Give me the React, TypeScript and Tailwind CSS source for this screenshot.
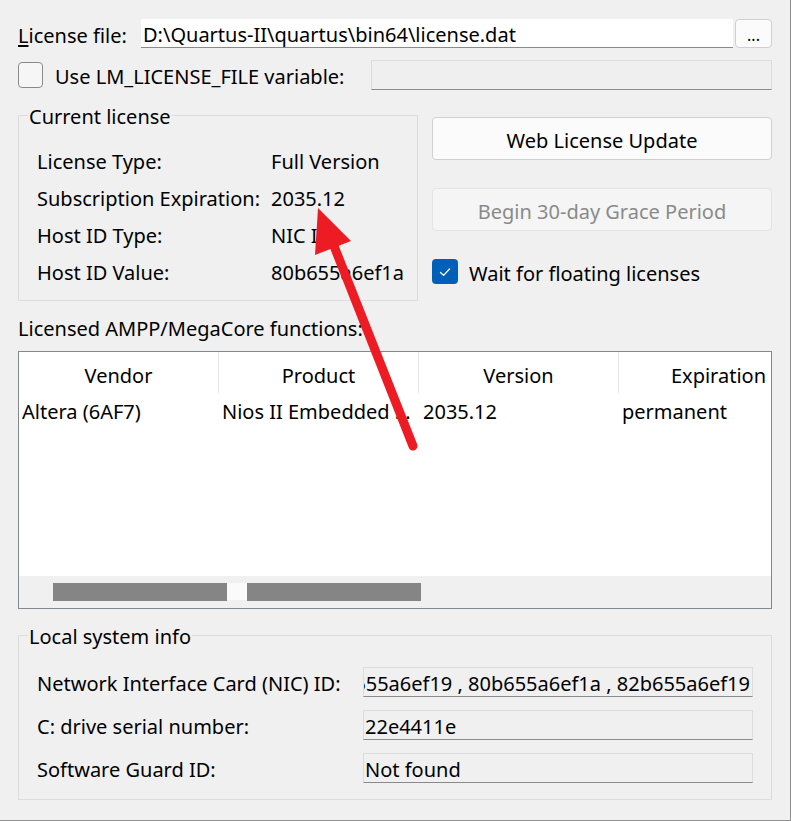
import React from 'react';

const font = "font-['Noto_Sans',sans-serif]";

function Checkbox({ checked }: { checked?: boolean }) {
  if (checked) {
    return (
      <div className="flex h-[25px] w-[26px] shrink-0 items-center justify-center rounded-[4px] bg-[#005fb8]">
        <svg width="14" height="14" viewBox="0 0 14 14" fill="none">
          <path d="M2.5 7.5 L5.6 10.4 L11.5 4" stroke="white" strokeWidth="1.3" strokeLinecap="round" strokeLinejoin="round" />
        </svg>
      </div>
    );
  }
  return <div className="h-[26px] w-[25px] shrink-0 rounded-[4px] border border-[#8a8a8a] bg-[#f6f6f6]" />;
}

function ReadOnlyField({ children, end }: { children?: React.ReactNode; end?: boolean }) {
  return (
    <div
      className={`flex h-[30px] w-[390px] items-center overflow-hidden whitespace-nowrap border border-[#dcdcdc] border-b-[#8a8a8a] bg-[#f0f0f0] pt-[4px] ${
        end ? 'justify-end pr-[2px]' : 'pl-[1px]'
      }`}
    >
      {children}
    </div>
  );
}

export default function App() {
  const licenseRows = [
    ['License Type:', 'Full Version'],
    ['Subscription Expiration:', '2035.12'],
    ['Host ID Type:', 'NIC ID'],
    ['Host ID Value:', '80b655a6ef1a'],
  ];

  return (
    <div
      className={`relative h-[821px] w-[791px] overflow-hidden border-r border-b border-[#8f8f8f] bg-[#f0f0f0] text-[20px] leading-none text-black ${font}`}
    >
      <div className="pl-[18px] pr-[18px] pt-[19px]">
        {/* LICENSE FILE */}
        <div className="flex h-[29px] items-center">
          <div className="w-[123px] pt-[4px]">
            <span className="underline underline-offset-2">L</span>icense file:
          </div>
          <div className="flex h-[29px] w-[592px] items-center border-b border-[#8a8a8a] bg-white pl-[2px] pt-[4px]">
            D:\Quartus-II\quartus\bin64\license.dat
          </div>
          <div className="ml-[2px] flex h-[29px] w-[37px] items-center justify-center rounded-[4px] border border-[#d0d0d0] bg-[#fbfbfb] pt-[2px] text-[16px]">
            ...
          </div>
        </div>

        {/* LM_LICENSE_FILE */}
        <div className="mt-[12px] flex h-[30px] items-center">
          <Checkbox />
          <div className="ml-[12px] pt-[4px]">Use LM_LICENSE_FILE variable:</div>
          <div className="ml-auto h-[30px] w-[401px] border border-[#dcdcdc] border-b-[#8a8a8a] bg-[#efefef]" />
        </div>

        {/* CURRENT LICENSE + BUTTONS */}
        <div className="mt-[13px] flex">
          <fieldset className="w-[400px] border border-[#dcdcdc] pb-[11px]">
            <legend className="ml-[9px] h-[24px] px-[1px] leading-[28px]">Current license</legend>
            <div className="pt-[14px] pl-[18px]">
              {licenseRows.map(([k, v]) => (
                <div key={k} className="flex h-[37px] items-center pt-[5px]">
                  <div className="w-[234px]">{k}</div>
                  <div>{v}</div>
                </div>
              ))}
            </div>
          </fieldset>

          <div className="ml-[14px] flex w-[340px] flex-col pt-[14px]">
            <div className="flex h-[43px] items-center justify-center rounded-[4px] border border-[#d0d0d0] bg-[#fbfbfb] pt-[5px]">
              Web License Update
            </div>
            <div className="mt-[28px] flex h-[43px] items-center justify-center rounded-[4px] border border-[#e3e3e3] bg-[#f5f5f5] pt-[5px] text-[#8a8a8a]">
              Begin 30-day Grace Period
            </div>
            <div className="mt-[28px] flex items-center">
              <Checkbox checked />
              <div className="ml-[11px] pt-[4px]">Wait for floating licenses</div>
            </div>
          </div>
        </div>

        {/* LICENSED FUNCTIONS */}
        <div className="mt-[14px] h-[24px] leading-[28px]">Licensed AMPP/MegaCore functions:</div>
        <div className="mt-[12px] flex h-[258px] flex-col overflow-hidden border border-[#828790] bg-white">
          <div className="flex h-[41px] shrink-0">
            {['Vendor', 'Product', 'Version', 'Expiration'].map((h) => (
              <div
                key={h}
                className="flex w-[200px] shrink-0 items-center justify-center border-r border-[#e5e5e5] pt-[6px]"
              >
                {h}
              </div>
            ))}
          </div>
          <div className="flex h-[34px] shrink-0 items-center pt-[4px]">
            <div className="w-[200px] shrink-0 pl-[3px]">Altera (6AF7)</div>
            <div className="w-[200px] shrink-0 truncate pl-[3px] pr-[6px]">Nios II Embedded Processor</div>
            <div className="w-[200px] shrink-0 pl-[4px]">2035.12</div>
            <div className="w-[200px] shrink-0 pl-[3px]">permanent</div>
          </div>
          <div className="flex-1" />
          <div className="flex h-[32px] shrink-0 bg-[#f0f0f0] pl-[34px] pt-[7px]">
            <div className="h-[18px] w-[174px] bg-[#858585]" />
            <div className="h-[17px] w-[20px] bg-[#fafafa]" />
            <div className="h-[18px] w-[174px] bg-[#858585]" />
          </div>
        </div>

        {/* LOCAL SYSTEM INFO */}
        <fieldset className="mt-[14px] border border-[#dcdcdc] pb-[16px]">
          <legend className="ml-[9px] h-[24px] px-[1px] leading-[28px]">Local system info</legend>
          <div className="flex flex-col gap-[13px] pt-[20px] pl-[18px]">
            <div className="flex items-center">
              <div className="w-[326px] pt-[4px]">Network Interface Card (NIC) ID:</div>
              <ReadOnlyField end>80b655a6ef19 , 80b655a6ef1a , 82b655a6ef19</ReadOnlyField>
            </div>
            <div className="flex items-center">
              <div className="w-[326px] pt-[4px]">C: drive serial number:</div>
              <ReadOnlyField>22e4411e</ReadOnlyField>
            </div>
            <div className="flex items-center">
              <div className="w-[326px] pt-[4px]">Software Guard ID:</div>
              <ReadOnlyField>Not found</ReadOnlyField>
            </div>
          </div>
        </fieldset>
      </div>

      {/* RED ANNOTATION ARROW */}
      <svg className="pointer-events-none absolute left-0 top-0" width="791" height="821" viewBox="0 0 791 821">
        <line x1="413" y1="446" x2="334" y2="246" stroke="#ed1c24" strokeWidth="9" strokeLinecap="round" />
        <polygon points="318,208 315,255 351,241" fill="#ed1c24" />
      </svg>
    </div>
  );
}
